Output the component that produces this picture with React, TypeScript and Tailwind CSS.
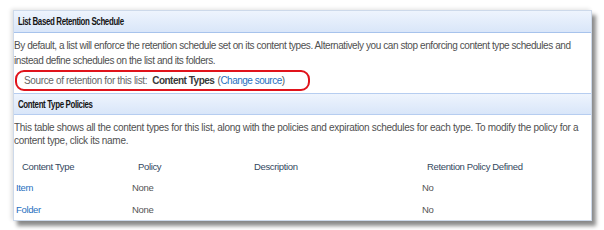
const rows = [
  { name: "Item", policy: "None", defined: "No" },
  { name: "Folder", policy: "None", defined: "No" },
];

const App = () => {
  return (
    <div className="w-[604px] h-[230px] bg-white pt-[10px] pl-[13px]" style={{ fontFamily: '"Liberation Sans", Arial, sans-serif' }}>
      <div className="w-[579px] h-[211px] bg-white border border-[#cdd9ea] shadow-[4px_5px_4px_rgba(0,0,0,0.45),-2px_-1px_4px_rgba(0,0,0,0.12)] overflow-hidden">
        <div className="h-[22px] flex items-center pl-[4px] bg-gradient-to-b from-[#eef4fd] to-[#d9e6f9] border-b border-[#a7c3ec] text-[11px] tracking-[-0.5px] font-bold text-[#141414] whitespace-nowrap">
          <span className="inline-block origin-left scale-x-[0.72]">List Based Retention Schedule</span>
        </div>
        <p className="pt-[5px] pr-[2px] text-[10px] tracking-[-0.42px] leading-[15px] text-[#505050]">
          By default, a list will enforce the retention schedule set on its content types. Alternatively you can stop enforcing content type schedules and instead define schedules on the list and its folders.
        </p>
        <div className="mt-[2px] ml-[1px] w-[295px] h-[21px] border-2 border-[#e0131b] rounded-[9px] flex items-center pl-[7px] text-[10px] tracking-[-0.35px] text-[#666666] whitespace-nowrap">
          <span>Source of retention for this list:</span>
          <span className="ml-[5px] font-bold tracking-[-0.5px] text-[#3a3a3a]">Content Types</span>
          <span className="ml-[3px] text-[#555555]">(</span>
          <span className="text-[#1f6fc0] tracking-[-0.5px]">Change source</span>
          <span className="text-[#555555]">)</span>
        </div>
        <div className="mt-[2px] h-[22px] flex items-center pl-[4px] bg-gradient-to-b from-[#eef4fd] to-[#d9e6f9] border-y border-[#b6cdf0] text-[11px] tracking-[-0.5px] font-bold text-[#141414] whitespace-nowrap">
          <span className="inline-block origin-left scale-x-[0.72]">Content Type Policies</span>
        </div>
        <p className="pt-[6px] pr-[1px] text-[10px] tracking-[-0.3px] leading-[13px] text-[#505050]">
          This table shows all the content types for this list, along with the policies and expiration schedules for each type. To modify the policy for a content type, click its name.
        </p>
        <div className="mt-[10px] grid grid-cols-[116px_116px_174px_1fr] text-[9.5px] tracking-[-0.35px] pl-[2px]">
          <div className="h-[20px] flex items-center pl-[6px] text-[#33475e]">Content Type</div>
          <div className="h-[20px] flex items-center pl-[6px] text-[#33475e]">Policy</div>
          <div className="h-[20px] flex items-center pl-[6px] text-[#33475e]">Description</div>
          <div className="h-[20px] flex items-center pl-[5px] text-[#33475e]">Retention Policy Defined</div>
          {rows.map((r) => (
            <>
              <div key={r.name + "a"} className="h-[22px] flex items-center text-[#1f6fc0]">{r.name}</div>
              <div key={r.name + "b"} className="h-[22px] flex items-center text-[#555555]">{r.policy}</div>
              <div key={r.name + "c"} className="h-[22px]"></div>
              <div key={r.name + "d"} className="h-[22px] flex items-center text-[#555555]">{r.defined}</div>
            </>
          ))}
        </div>
      </div>
    </div>
  );
};

export default App;
